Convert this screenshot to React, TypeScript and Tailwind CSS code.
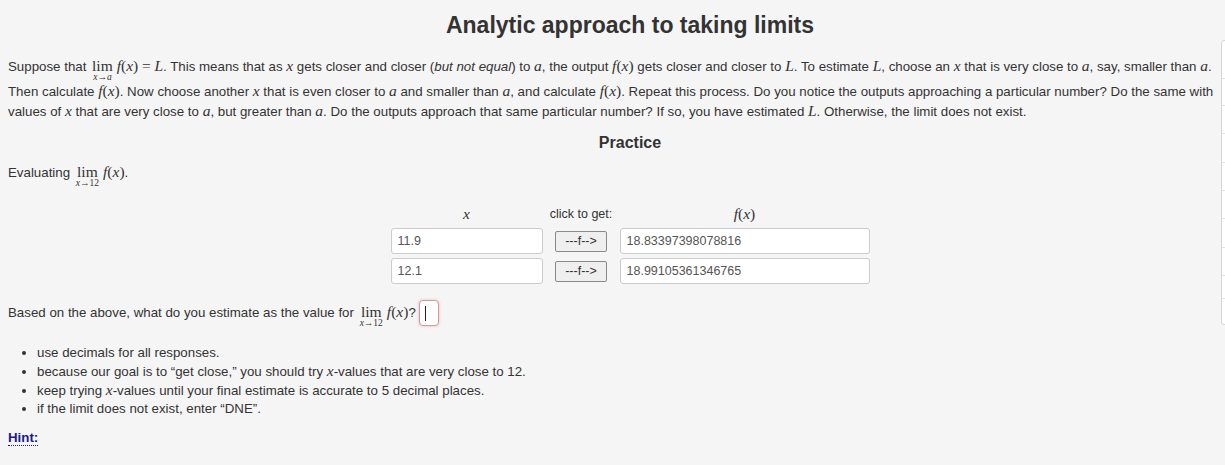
import * as React from "react";

const serif = "font-['Liberation_Serif','DejaVu_Serif',serif]";

function M({ children }: { children: React.ReactNode }) {
  return <span className={`${serif} italic text-[15.5px]`}>{children}</span>;
}

function R({ children }: { children: React.ReactNode }) {
  return <span className={`${serif} text-[15.5px]`}>{children}</span>;
}

function Fx() {
  return (
    <span className={`${serif} text-[15.5px]`}>
      <span className="italic">f</span>(<span className="italic">x</span>)
    </span>
  );
}

function Lim({ to }: { to: React.ReactNode }) {
  return (
    <span className="ml-[2px] mr-[4px] inline-flex flex-col items-center">
      <span className={`${serif} text-[15.5px] leading-[15px]`}>lim</span>
      <span className={`${serif} text-[9.5px] leading-[8px]`}>
        <span className="italic">x</span>→{to}
      </span>
    </span>
  );
}

function Cell({ value }: { value: string }) {
  return (
    <div className="h-[26px] rounded-[3px] border border-[#cccccc] bg-white px-[6px] text-[12.5px] leading-[24px] text-[#555]">
      {value}
    </div>
  );
}

function Arrow() {
  return (
    <div className="flex h-[26px] items-center justify-center">
      <button className="h-[21px] w-[52px] rounded-[2px] border border-[#8a8a8a] bg-[#efefef] text-[12.5px] leading-[19px] text-[#333]">
        ---f--&gt;
      </button>
    </div>
  );
}

export default function App() {
  const rows = [
    { x: "11.9", fx: "18.83397398078816" },
    { x: "12.1", fx: "18.99105361346765" },
  ];

  return (
    <div className="relative h-[465px] w-full overflow-hidden bg-[#f5f5f5] font-['Liberation_Sans',Arial,sans-serif] text-[#333]">
      <div className="w-[1260px] px-[8px]">
        <h1 className="pt-[11px] text-center text-[23px] font-bold leading-[28px] text-[#333]">
          Analytic approach to taking limits
        </h1>

        <p className="mt-[17px] whitespace-nowrap text-[13.3px] leading-[19px]">
          Suppose that <Lim to={<span className="italic">a</span>} />
          <Fx /> <R>=</R> <M>L</M>. This means that as <M>x</M> gets closer and closer (
          <span className="italic">but not equal</span>) to <M>a</M>, the output <Fx /> gets closer and closer to{" "}
          <M>L</M>. To estimate <M>L</M>, choose an <M>x</M> that is very close to <M>a</M>, say, smaller than{" "}
          <M>a</M>.
          <br />
          Then calculate <Fx />. Now choose another <M>x</M> that is even closer to <M>a</M> and smaller than{" "}
          <M>a</M>, and calculate <Fx />. Repeat this process. Do you notice the outputs approaching a particular
          number? Do the same with
          <br />
          values of <M>x</M> that are very close to <M>a</M>, but greater than <M>a</M>. Do the outputs approach
          that same particular number? If so, you have estimated <M>L</M>. Otherwise, the limit does not exist.
        </p>

        <h2 className="mt-[12px] text-center text-[16px] font-bold leading-[20px]">Practice</h2>

        <div className="mt-[9px] text-[13.3px] leading-[19px]">
          Evaluating <Lim to="12" />
          <Fx />.
        </div>

        <div className="mt-[18px] flex justify-center">
          <div className="grid grid-cols-[152px_69px_250px] gap-x-[4px] gap-y-[4px]">
            <div className="text-center text-[13px] leading-[18px]">
              <M>x</M>
            </div>
            <div className="text-center text-[12.5px] leading-[18px]">click to get:</div>
            <div className="text-center text-[13px] leading-[18px]">
              <Fx />
            </div>
            {rows.map((r) => (
              <React.Fragment key={r.x}>
                <Cell value={r.x} />
                <Arrow />
                <Cell value={r.fx} />
              </React.Fragment>
            ))}
          </div>
        </div>

        <div className="mt-[16px] flex h-[26px] items-center text-[13.3px] leading-[19px]">
          <div className="pt-[3px]">
            Based on the above, what do you estimate as the value for <Lim to="12" />
            <Fx />?
          </div>
          <div className="ml-[3px] flex h-[26px] w-[20px] items-center rounded-[4px] border border-[#d79a9a] bg-white pl-[5px] shadow-[0_0_3px_rgba(200,80,80,0.35)]">
            <div className="h-[15px] w-px bg-[#222]" />
          </div>
        </div>

        <ul className="mt-[18px] list-disc pl-[29px] text-[13.3px] leading-[18px]">
          <li>use decimals for all responses.</li>
          <li>
            because our goal is to “get close,” you should try <M>x</M>-values that are very close to 12.
          </li>
          <li>
            keep trying <M>x</M>-values until your final estimate is accurate to 5 decimal places.
          </li>
          <li>if the limit does not exist, enter “DNE”.</li>
        </ul>

        <div className="mt-[11px] text-[13.3px] leading-[17px]">
          <span className="border-b border-dotted border-[#1a1a90] font-bold text-[#1a1a90]">Hint:</span>
        </div>
      </div>

      <div className="absolute left-[1221px] top-[40px] flex w-[30px] flex-col rounded-[3px] border border-[#d6d6d6] bg-white">
        {[38, 27, 28, 29, 28, 28, 29, 28, 23, 25].map((h, i) => (
          <div key={i} className="border-b border-[#e2e2e2] last:border-b-0" style={{ height: h }} />
        ))}
      </div>
    </div>
  );
}
